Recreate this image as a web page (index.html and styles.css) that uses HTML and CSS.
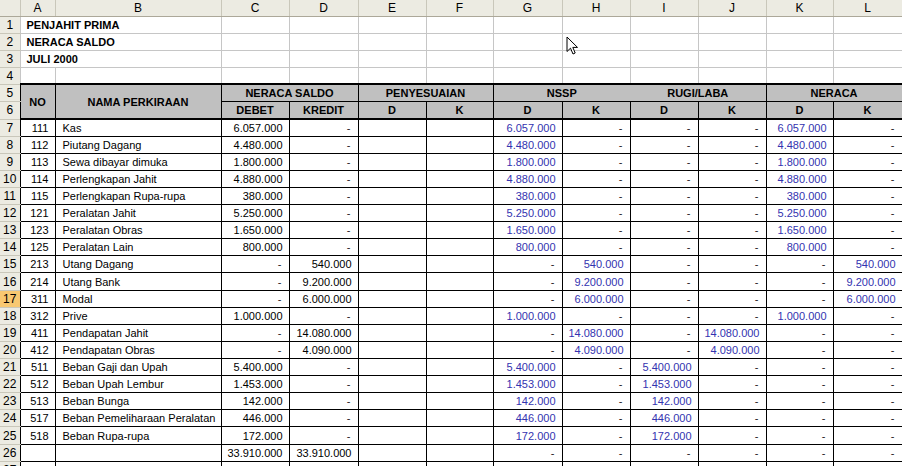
FILE: index.html
```html
<!DOCTYPE html>
<html>
<head>
<meta charset="utf-8">
<title>Neraca Saldo</title>
<link rel="stylesheet" href="styles.css">
</head>
<body>
<div class="sheet">
<table class="grid">
<colgroup>
<col class="w-rh"><col class="w-a"><col class="w-b"><col class="w-c"><col class="w-d"><col class="w-e"><col class="w-f"><col class="w-g"><col class="w-h"><col class="w-i"><col class="w-j"><col class="w-k"><col class="w-l">
</colgroup>
<tr class="colhdr">
<th class="corner"></th><th class="ch">A</th><th class="ch">B</th><th class="ch">C</th><th class="ch">D</th><th class="ch">E</th><th class="ch">F</th><th class="ch">G</th><th class="ch">H</th><th class="ch">I</th><th class="ch">J</th><th class="ch">K</th><th class="ch">L</th>
</tr>
<tr class="top"><th class="rh">1</th><td class="ttl" colspan="2">PENJAHIT PRIMA</td><td></td><td></td><td></td><td></td><td></td><td></td><td></td><td></td><td></td><td></td></tr>
<tr class="top"><th class="rh">2</th><td class="ttl" colspan="2">NERACA SALDO</td><td></td><td></td><td></td><td></td><td></td><td></td><td></td><td></td><td></td><td></td></tr>
<tr class="top"><th class="rh">3</th><td class="ttl" colspan="2">JULI 2000</td><td></td><td></td><td></td><td></td><td></td><td></td><td></td><td></td><td></td><td></td></tr>
<tr class="top"><th class="rh">4</th><td></td><td></td><td></td><td></td><td></td><td></td><td></td><td></td><td></td><td></td><td></td><td></td></tr>
<tr class="hrow1"><th class="rh">5</th><td class="hd hlast" rowspan="2">NO</td><td class="hd hlast" rowspan="2">NAMA PERKIRAAN</td><td class="hd" colspan="2">NERACA SALDO</td><td class="hd" colspan="2">PENYESUAIAN</td><td class="hd noright" colspan="2">NSSP</td><td class="hd noleft" colspan="2">RUGI/LABA</td><td class="hd" colspan="2">NERACA</td></tr>
<tr class="hrow2"><th class="rh">6</th><td class="hd hlast">DEBET</td><td class="hd hlast">KREDIT</td><td class="hd hlast">D</td><td class="hd hlast">K</td><td class="hd hlast">D</td><td class="hd hlast">K</td><td class="hd hlast">D</td><td class="hd hlast">K</td><td class="hd hlast">D</td><td class="hd hlast">K</td></tr>

<tr class="body"><th class="rh">7</th><td class="no">111</td><td class="nm">Kas</td><td class="n">6.057.000</td><td class="d">-</td><td></td><td></td><td class="bn">6.057.000</td><td class="d">-</td><td class="d">-</td><td class="d">-</td><td class="bn">6.057.000</td><td class="d">-</td></tr>
<tr class="body"><th class="rh">8</th><td class="no">112</td><td class="nm">Piutang Dagang</td><td class="n">4.480.000</td><td class="d">-</td><td></td><td></td><td class="bn">4.480.000</td><td class="d">-</td><td class="d">-</td><td class="d">-</td><td class="bn">4.480.000</td><td class="d">-</td></tr>
<tr class="body"><th class="rh">9</th><td class="no">113</td><td class="nm">Sewa dibayar dimuka</td><td class="n">1.800.000</td><td class="d">-</td><td></td><td></td><td class="bn">1.800.000</td><td class="d">-</td><td class="d">-</td><td class="d">-</td><td class="bn">1.800.000</td><td class="d">-</td></tr>
<tr class="body"><th class="rh">10</th><td class="no">114</td><td class="nm">Perlengkapan Jahit</td><td class="n">4.880.000</td><td class="d">-</td><td></td><td></td><td class="bn">4.880.000</td><td class="d">-</td><td class="d">-</td><td class="d">-</td><td class="bn">4.880.000</td><td class="d">-</td></tr>
<tr class="body"><th class="rh">11</th><td class="no">115</td><td class="nm">Perlengkapan Rupa-rupa</td><td class="n">380.000</td><td class="d">-</td><td></td><td></td><td class="bn">380.000</td><td class="d">-</td><td class="d">-</td><td class="d">-</td><td class="bn">380.000</td><td class="d">-</td></tr>
<tr class="body"><th class="rh">12</th><td class="no">121</td><td class="nm">Peralatan Jahit</td><td class="n">5.250.000</td><td class="d">-</td><td></td><td></td><td class="bn">5.250.000</td><td class="d">-</td><td class="d">-</td><td class="d">-</td><td class="bn">5.250.000</td><td class="d">-</td></tr>
<tr class="body"><th class="rh">13</th><td class="no">123</td><td class="nm">Peralatan Obras</td><td class="n">1.650.000</td><td class="d">-</td><td></td><td></td><td class="bn">1.650.000</td><td class="d">-</td><td class="d">-</td><td class="d">-</td><td class="bn">1.650.000</td><td class="d">-</td></tr>
<tr class="body"><th class="rh">14</th><td class="no">125</td><td class="nm">Peralatan Lain</td><td class="n">800.000</td><td class="d">-</td><td></td><td></td><td class="bn">800.000</td><td class="d">-</td><td class="d">-</td><td class="d">-</td><td class="bn">800.000</td><td class="d">-</td></tr>
<tr class="body"><th class="rh">15</th><td class="no">213</td><td class="nm">Utang Dagang</td><td class="d">-</td><td class="n">540.000</td><td></td><td></td><td class="d">-</td><td class="bn">540.000</td><td class="d">-</td><td class="d">-</td><td class="d">-</td><td class="bn">540.000</td></tr>
<tr class="body"><th class="rh">16</th><td class="no">214</td><td class="nm">Utang Bank</td><td class="d">-</td><td class="n">9.200.000</td><td></td><td></td><td class="d">-</td><td class="bn">9.200.000</td><td class="d">-</td><td class="d">-</td><td class="d">-</td><td class="bn">9.200.000</td></tr>
<tr class="body"><th class="rh active">17</th><td class="no">311</td><td class="nm">Modal</td><td class="d">-</td><td class="n">6.000.000</td><td></td><td></td><td class="d">-</td><td class="bn">6.000.000</td><td class="d">-</td><td class="d">-</td><td class="d">-</td><td class="bn">6.000.000</td></tr>
<tr class="body"><th class="rh">18</th><td class="no">312</td><td class="nm">Prive</td><td class="n">1.000.000</td><td class="d">-</td><td></td><td></td><td class="bn">1.000.000</td><td class="d">-</td><td class="d">-</td><td class="d">-</td><td class="bn">1.000.000</td><td class="d">-</td></tr>
<tr class="body"><th class="rh">19</th><td class="no">411</td><td class="nm">Pendapatan Jahit</td><td class="d">-</td><td class="n">14.080.000</td><td></td><td></td><td class="d">-</td><td class="bn">14.080.000</td><td class="d">-</td><td class="bn">14.080.000</td><td class="d">-</td><td class="d">-</td></tr>
<tr class="body"><th class="rh">20</th><td class="no">412</td><td class="nm">Pendapatan Obras</td><td class="d">-</td><td class="n">4.090.000</td><td></td><td></td><td class="d">-</td><td class="bn">4.090.000</td><td class="d">-</td><td class="bn">4.090.000</td><td class="d">-</td><td class="d">-</td></tr>
<tr class="body"><th class="rh">21</th><td class="no">511</td><td class="nm">Beban Gaji dan Upah</td><td class="n">5.400.000</td><td class="d">-</td><td></td><td></td><td class="bn">5.400.000</td><td class="d">-</td><td class="bn">5.400.000</td><td class="d">-</td><td class="d">-</td><td class="d">-</td></tr>
<tr class="body"><th class="rh">22</th><td class="no">512</td><td class="nm">Beban Upah Lembur</td><td class="n">1.453.000</td><td class="d">-</td><td></td><td></td><td class="bn">1.453.000</td><td class="d">-</td><td class="bn">1.453.000</td><td class="d">-</td><td class="d">-</td><td class="d">-</td></tr>
<tr class="body"><th class="rh">23</th><td class="no">513</td><td class="nm">Beban Bunga</td><td class="n">142.000</td><td class="d">-</td><td></td><td></td><td class="bn">142.000</td><td class="d">-</td><td class="bn">142.000</td><td class="d">-</td><td class="d">-</td><td class="d">-</td></tr>
<tr class="body"><th class="rh">24</th><td class="no">517</td><td class="nm">Beban Pemeliharaan Peralatan</td><td class="n">446.000</td><td class="d">-</td><td></td><td></td><td class="bn">446.000</td><td class="d">-</td><td class="bn">446.000</td><td class="d">-</td><td class="d">-</td><td class="d">-</td></tr>
<tr class="body"><th class="rh">25</th><td class="no">518</td><td class="nm">Beban Rupa-rupa</td><td class="n">172.000</td><td class="d">-</td><td></td><td></td><td class="bn">172.000</td><td class="d">-</td><td class="bn">172.000</td><td class="d">-</td><td class="d">-</td><td class="d">-</td></tr>
<tr class="body"><th class="rh">26</th><td></td><td></td><td class="n">33.910.000</td><td class="n">33.910.000</td><td></td><td></td><td class="d">-</td><td class="d">-</td><td class="d">-</td><td class="d">-</td><td class="d">-</td><td class="d">-</td></tr>
<tr class="body"><th class="rh">27</th><td></td><td></td><td></td><td></td><td></td><td></td><td></td><td></td><td></td><td></td><td></td><td></td></tr>
</table>
<svg class="cursor" width="13" height="20" viewBox="0 0 13 20" xmlns="http://www.w3.org/2000/svg">
<path d="M1 1 L1 15.5 L4.5 12.2 L7 18 L9.2 17 L6.8 11.4 L11.5 11.4 Z" fill="#ffffff" stroke="#000000" stroke-width="1" stroke-linejoin="miter"/>
</svg>
</div>
</body>
</html>
```

FILE: styles.css
```css
html, body {
  margin: 0;
  padding: 0;
  background: #ffffff;
  overflow: hidden;
}

.sheet {
  position: relative;
  width: 902px;
  height: 466px;
  overflow: hidden;
}

.grid {
  border-collapse: collapse;
  table-layout: fixed;
  width: 902px;
  font-family: "Liberation Sans", Arial, sans-serif;
  font-size: 11px;
  color: #000000;
}

.w-rh { width: 20px; }
.w-a { width: 35px; }
.w-b { width: 166px; }
.w-c { width: 68px; }
.w-d { width: 69px; }
.w-e { width: 68px; }
.w-f { width: 67px; }
.w-g { width: 69px; }
.w-h { width: 68px; }
.w-i { width: 68px; }
.w-j { width: 68px; }
.w-k { width: 67px; }
.w-l { width: 69px; }

.grid td, .grid th {
  padding: 0;
  overflow: hidden;
  white-space: nowrap;
  line-height: 14px;
}

.colhdr { height: 16px; }
.colhdr th {
  background: #ecebe2;
  font-weight: normal;
  font-size: 12px;
  color: #000000;
  text-align: center;
  border-right: 1px solid #c9c7ba;
  border-bottom: 1px solid #aca899;
  line-height: 14px;
}
.corner {
  background: #ecebe2;
}

tr.top, tr.hrow1 { height: 17px; }
tr.hrow2 { height: 18px; }
tr.body { height: 17.12px; }

.rh {
  background: #ecebe2;
  font-weight: normal;
  font-size: 12px;
  text-align: center;
  border-bottom: 1px solid #c9c7ba;
  border-right: none;
  color: #000000;
}
.rh.active {
  background: #f8c871;
  color: #000000;
}

tr.top td {
  border: 1px solid #c6c6c6;
}

.ttl {
  font-weight: bold;
  padding-left: 6px !important;
  text-align: left;
}

.hd {
  background: #c0c0c0;
  font-weight: bold;
  text-align: center;
  border: 1px solid #000000;
}
tr.hrow1 td { border-top: 2px solid #000000; }
.hd.hlast { border-bottom: 2px solid #000000; }
.hd.noright { border-right: none; }
.hd.noleft { border-left: none; }

tr.body td {
  border: 1px solid #000000;
  background: #ffffff;
}

.no {
  text-align: right;
  padding-right: 6px !important;
}
.nm {
  text-align: left;
  padding-left: 7px !important;
}
.n {
  text-align: right;
  padding-right: 6px !important;
}
.bn {
  text-align: right;
  padding-right: 6px !important;
  color: #3333b0;
}
.d {
  text-align: right;
  padding-right: 7px !important;
  color: #222222;
}

.cursor {
  position: absolute;
  left: 566px;
  top: 36px;
}
```
